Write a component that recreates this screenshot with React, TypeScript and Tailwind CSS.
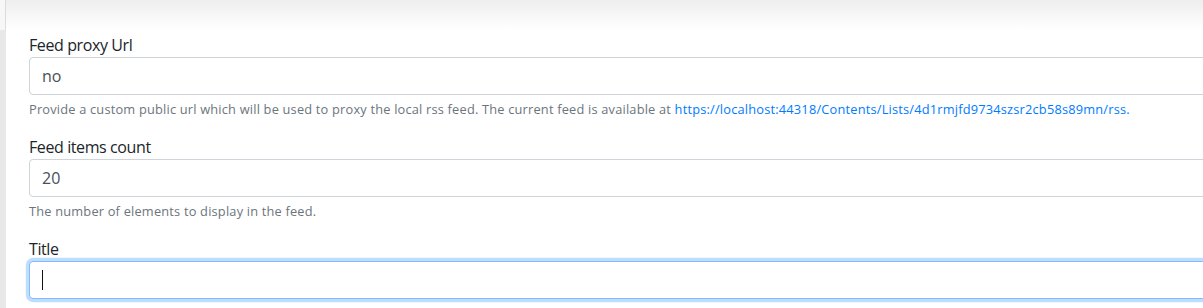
function Label({ children }: { children: React.ReactNode }) {
  return (
    <div className="text-[16px] leading-6 text-[#212529] tracking-[-0.4px] whitespace-nowrap">{children}</div>
  );
}

function Help({ children }: { children: React.ReactNode }) {
  return (
    <div className="mt-1 text-[12.8px] leading-5 text-[#6c757d] tracking-[0.2px] whitespace-nowrap">{children}</div>
  );
}

export default function App() {
  return (
    <div
      className="relative flex w-[1203px] h-[308px] overflow-hidden bg-white"
      style={{ fontFamily: '"Open Sans", "Noto Sans", sans-serif' }}
    >
      <div className="flex flex-col w-[6px] shrink-0">
        <div className="h-[30px] bg-[#f7f7f7] border-r border-[#dcdcdc]" />
        <div className="flex-1 bg-[#e8e8e8]" />
      </div>
      <div className="flex flex-col flex-1 min-w-0">
        <div className="h-[30px] shrink-0 bg-gradient-to-b from-[#eeeeee] to-white" />
        <div className="flex flex-col pl-[23px] pt-[3px]">
          <div className="flex flex-col mb-4">
            <Label>Feed proxy Url</Label>
            <div className="flex items-center w-[1220px] h-[38px] px-3 border border-[#ced4da] rounded text-[16px] text-[#495057] bg-white">
              no
            </div>
            <Help>
              Provide a custom public url which will be used to proxy the local rss feed. The current feed is available at{" "}
              <span className="text-[#007bff]">https://localhost:44318/Contents/Lists/4d1rmjfd9734szsr2cb58s89mn/rss.</span>
            </Help>
          </div>
          <div className="flex flex-col mb-4">
            <Label>Feed items count</Label>
            <div className="flex items-center w-[1220px] h-[38px] px-3 border border-[#ced4da] rounded text-[16px] text-[#495057] bg-white">
              20
            </div>
            <Help>The number of elements to display in the feed.</Help>
          </div>
          <div className="flex flex-col mb-4">
            <Label>Title</Label>
            <div className="relative flex items-center w-[1220px] h-[38px] px-3 border border-[#80bdff] rounded text-[16px] text-[#495057] bg-white shadow-[0_0_0_3.2px_rgba(0,123,255,0.25)]">
              <span className="w-px h-[20px] bg-[#111]" />
            </div>
          </div>
        </div>
      </div>
    </div>
  );
}
